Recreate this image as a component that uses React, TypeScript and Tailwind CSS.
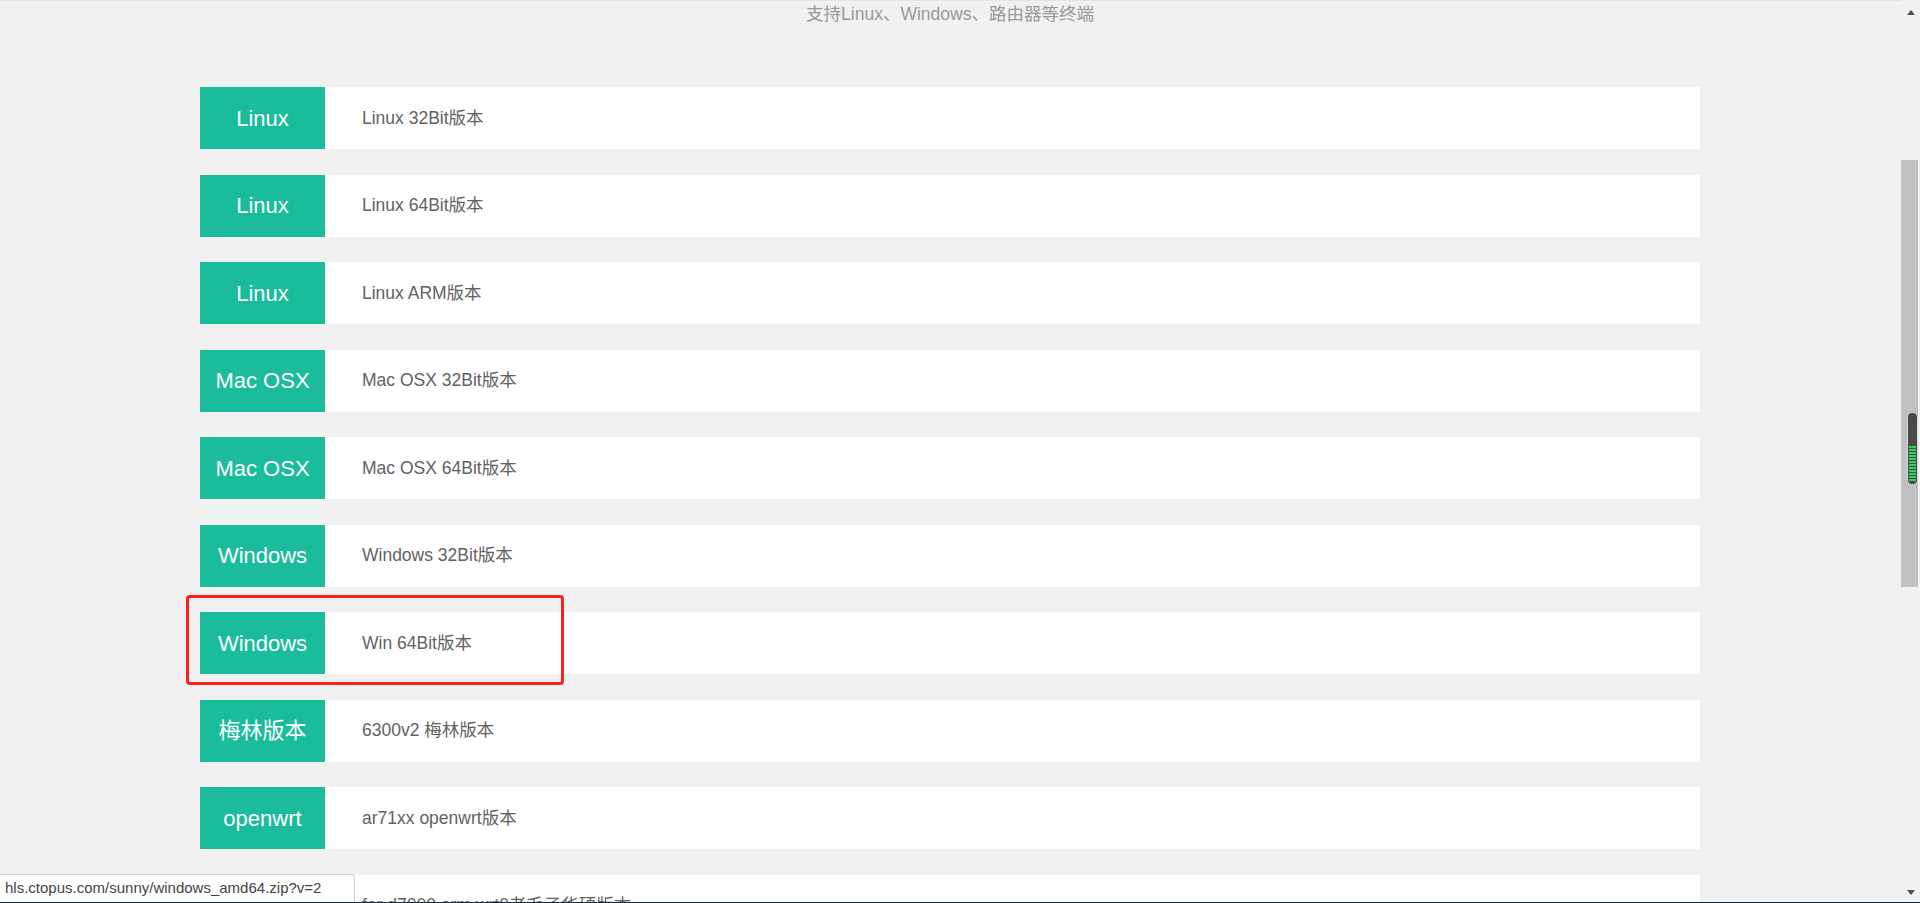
import React from "react";

const rows = [
  { tag: "Linux", name: "Linux 32Bit版本" },
  { tag: "Linux", name: "Linux 64Bit版本" },
  { tag: "Linux", name: "Linux ARM版本" },
  { tag: "Mac OSX", name: "Mac OSX 32Bit版本" },
  { tag: "Mac OSX", name: "Mac OSX 64Bit版本" },
  { tag: "Windows", name: "Windows 32Bit版本" },
  { tag: "Windows", name: "Win 64Bit版本" },
  { tag: "梅林版本", name: "6300v2 梅林版本" },
  { tag: "openwrt", name: "ar71xx openwrt版本" },
  { tag: "老毛子", name: "for d7000 arm wrt0老毛子华硕版本" },
];

const font = "font-['Liberation_Sans','Noto_Sans_CJK_SC',sans-serif]";

function ScrollWidget() {
  // little green level meter drawn on the scrollbar thumb
  return (
    <svg width="11" height="73" viewBox="0 0 11 73" className="absolute left-[6px] top-[252px]">
      <rect x="0.5" y="0.5" width="10" height="72" rx="4" fill="#4a4a4a" stroke="#d8d8d8" />
      {Array.from({ length: 12 }).map((_, i) => (
        <rect key={i} x="2" y={34 + i * 3} width="7" height="2" fill="#2fd35a" />
      ))}
    </svg>
  );
}

export default function App() {
  return (
    <div className={`relative h-[903px] w-full overflow-hidden bg-[#f1f1f1] ${font}`}>
      {/* page */}
      <div className="w-[1900px] border-t border-[#e4e4e4]">
        <p className="h-[27px] text-center text-[17.5px] leading-[27px] text-[#999]">
          支持Linux、Windows、路由器等终端
        </p>
        <div className="mx-auto mt-[59px] flex w-[1500px] flex-col gap-[25.5px]">
          {rows.map((r, i) => (
            <div key={i} className="flex h-[62px] shrink-0 bg-white">
              <div className="flex w-[125px] items-center justify-center bg-[#1abc9c] text-[22px] text-white">
                {r.tag}
              </div>
              <div className="flex items-center pl-[37px] text-[17.5px] text-[#626262]">
                {r.name}
              </div>
            </div>
          ))}
        </div>
      </div>

      {/* red highlight */}
      <div className="absolute left-[186px] top-[595px] h-[90px] w-[378px] rounded-[4px] border-[3px] border-[#ff1f1f]"></div>

      {/* scrollbar */}
      <div className="absolute right-0 top-0 h-[902px] w-[19px] bg-[#f1f1f1]">
        <div className="absolute left-[6px] top-[10px] h-0 w-0 border-x-[4px] border-b-[5px] border-x-transparent border-b-[#505050]"></div>
        <div className="absolute left-0 top-[160px] h-[427px] w-[17px] bg-[#c1c1c1]">
          <ScrollWidget />
        </div>
        <div className="absolute left-[6px] top-[890px] h-0 w-0 border-x-[4px] border-t-[5px] border-x-transparent border-t-[#505050]"></div>
      </div>

      {/* status bar */}
      <div className="absolute bottom-[1px] left-0 flex h-[28px] w-[355px] items-center rounded-tr-[4px] border-r border-t border-[#d0d0d0] bg-white pl-[5px] text-[15px] text-[#444]">
        hls.ctopus.com/sunny/windows_amd64.zip?v=2
      </div>
      <div className="absolute bottom-0 left-0 h-[1px] w-full bg-[#1f2b38]"></div>
    </div>
  );
}
